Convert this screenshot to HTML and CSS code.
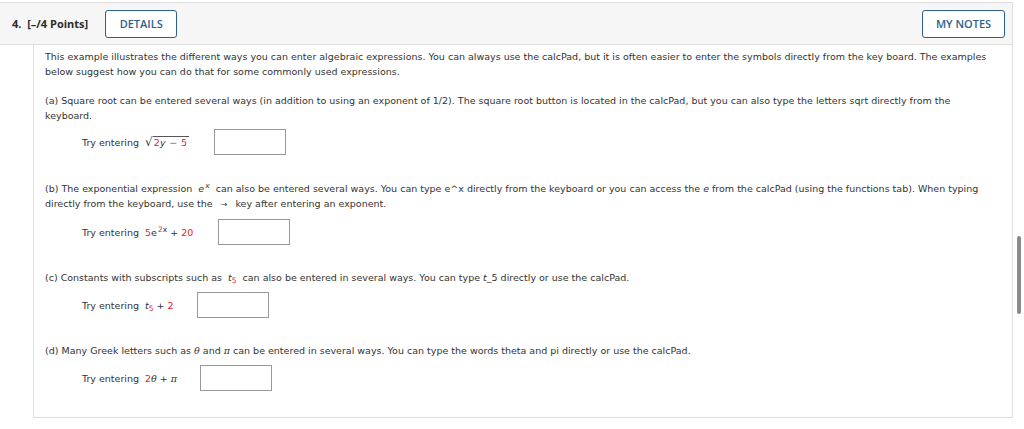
FILE: index.html
```html
<!DOCTYPE html>
<html>
<head>
<meta charset="utf-8">
<link rel="stylesheet" href="styles.css">
</head>
<body>
<div class="page">
  <div class="header">
    <span class="qnum">4.&nbsp; [–/4 Points]</span>
    <button class="btn details">DETAILS</button>
    <span class="spacer"></span>
    <button class="btn notes">MY NOTES</button>
  </div>
  <div class="card">
    <p class="txt">This example illustrates the different ways you can enter algebraic expressions. You can always use the calcPad, but it is often easier to enter the symbols directly from the key board. The examples below suggest how you can do that for some commonly used expressions.</p>

    <p class="txt part">(a) Square root can be entered several ways (in addition to using an exponent of 1/2). The square root button is located in the calcPad, but you can also type the letters sqrt directly from the keyboard.</p>
    <div class="try try-a">
      <span class="label">Try entering</span>
      <span class="math"><span class="rad">√</span><span class="radicand"><span class="r">2</span><i>y</i> <span class="op">−</span> <span class="r">5</span></span></span>
      <span class="box"></span>
    </div>

    <p class="txt part part-b">(b) The exponential expression&nbsp; <span class="math"><i>e</i><sup><i>x</i></sup></span>&nbsp; can also be entered several ways. You can type e^x directly from the keyboard or you can access the <i>e</i> from the calcPad (using the functions tab). When typing directly from the keyboard, use the <span class="arrow">→</span> key after entering an exponent.</p>
    <div class="try try-b">
      <span class="label">Try entering</span>
      <span class="math"><span class="r">5</span>e<sup><span class="r">2</span>x</sup> + <span class="r">20</span></span>
      <span class="box"></span>
    </div>

    <p class="txt part">(c) Constants with subscripts such as&nbsp; <span class="math"><i>t</i><sub class="r">5</sub></span>&nbsp; can also be entered in several ways. You can type <i>t</i>_5 directly or use the calcPad.</p>
    <div class="try try-c">
      <span class="label">Try entering</span>
      <span class="math"><i>t</i><sub class="r">5</sub> + <span class="r">2</span></span>
      <span class="box"></span>
    </div>

    <p class="txt part">(d) Many Greek letters such as <i class="greek">θ</i> and <i class="greek">π</i> can be entered in several ways. You can type the words theta and pi directly or use the calcPad.</p>
    <div class="try try-d">
      <span class="label">Try entering</span>
      <span class="math"><span class="r">2</span><i class="greek">θ</i> + <i class="greek">π</i></span>
      <span class="box"></span>
    </div>
  </div>
</div>
<div class="scrollbar"></div>
</body>
</html>
```

FILE: styles.css
```css
html, body {
  margin: 0;
  padding: 0;
  background: #ffffff;
}
.page {
  width: 1013px;
  margin-top: 2px;
}
.header {
  height: 43px;
  box-sizing: border-box;
  background: #f6f6f6;
  border: 1px solid #dedede;
  border-left: none;
  display: flex;
  align-items: center;
  padding: 0 7px 0 12px;
  font-family: "Open Sans", "Liberation Sans", sans-serif;
}
.qnum {
  font-weight: 700;
  font-size: 11px;
  color: #2b2b2b;
  margin-right: 17px;
}
.btn {
  height: 28px;
  box-sizing: border-box;
  background: #fff;
  border: 1px solid #2e5f8c;
  border-radius: 3px;
  color: #2e5f8c;
  font-family: "Open Sans", "Liberation Sans", sans-serif;
  font-weight: 600;
  font-size: 11px;
  padding: 0 10px;
}
.details { width: 72px; }
.notes { width: 83px; }
.spacer { flex: 1; }
.card {
  margin-left: 33px;
  border: 1px solid #dedede;
  border-top: none;
  padding: 4px 20px 26px 11px;
  font-family: "DejaVu Sans", Verdana, sans-serif;
  font-size: 9.5px;
  color: #333;
}
.txt {
  margin: 0;
  line-height: 15px;
}
.part { margin-top: 14px; }
.try {
  display: flex;
  align-items: center;
  height: 26px;
  padding-left: 37px;
}
.try-a { margin-top: 6px; }
.try-b { margin-top: 7px; }
.try-c { margin-top: 7px; }
.try-d { margin-top: 7px; }
.try + .part { margin-top: 25px; }
.try + .part-b { margin-top: 26px; }
.label { margin-right: 6px; }
.math { white-space: nowrap; line-height: 15px; }
.r { color: #e8221b; }
.op { color: #777; }
.rad { font-size: 12px; }
.radicand {
  border-top: 1px solid #555;
  padding: 0 2px 0 1px;
  letter-spacing: 0.3px;
}
sup { font-size: 7.5px; vertical-align: 4px; line-height: 0; padding-left: 1px; }
sub { font-size: 7.5px; vertical-align: -2px; line-height: 0; }
.greek { font-family: "DejaVu Serif", "Liberation Serif", serif; }
.arrow { font-size: 8px; margin: 0 5px; }
.box {
  width: 72px;
  height: 26px;
  box-sizing: border-box;
  border: 1px solid #999;
  background: #fff;
}
.try-a .box { margin-left: 25px; }
.try-b .box { margin-left: 25px; }
.try-c .box { margin-left: 23px; }
.try-d .box { margin-left: 23px; }
.scrollbar {
  position: absolute;
  left: 1017px;
  top: 236px;
  width: 4px;
  height: 78px;
  border-radius: 2px;
  background: #8a8a8a;
}
```
